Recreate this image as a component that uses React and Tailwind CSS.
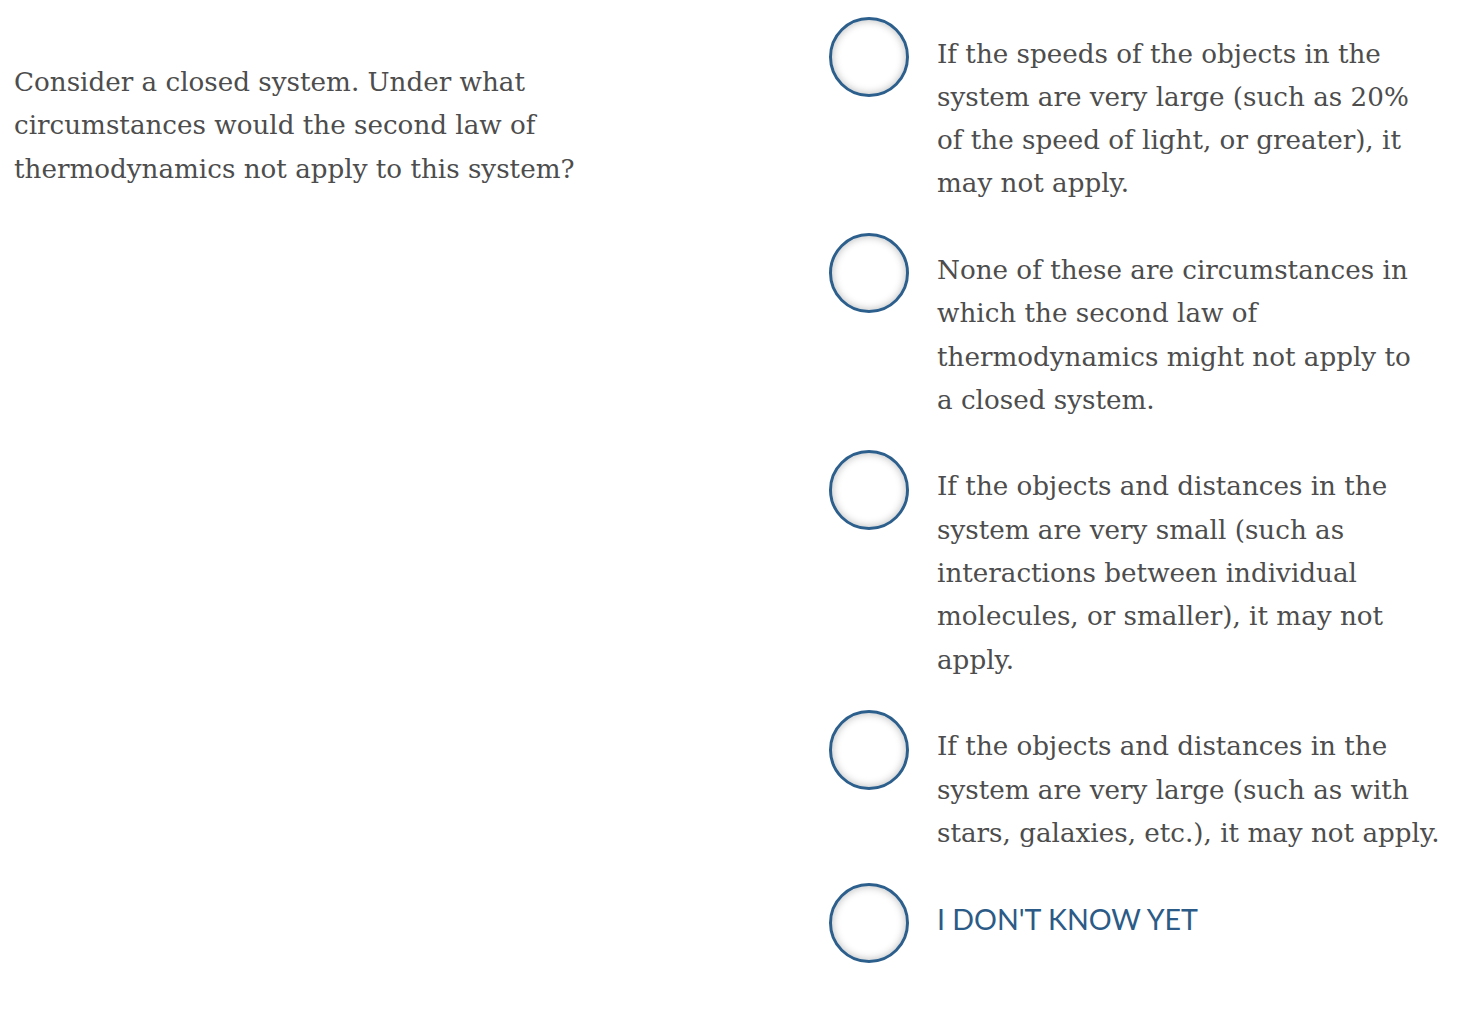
import React from 'react';

const options = [
  'If the speeds of the objects in the system are very large (such as 20% of the speed of light, or greater), it may not apply.',
  'None of these are circumstances in which the second law of thermodynamics might not apply to a\u00a0closed system.',
  'If the objects and distances in the system are very small (such as interactions between individual molecules, or smaller), it may not apply.',
  'If the objects and distances in the system are very large (such as with stars, galaxies, etc.), it may not apply.',
];

const Radio = () => (
  <div className="w-[80px] h-[80px] shrink-0 rounded-full border-[3px] border-[#2d5f8d] bg-white shadow-[inset_0_0_8px_rgba(0,0,0,0.28)]" />
);

const Option = ({ children, plain }) => (
  <div className="flex items-start">
    <Radio />
    <div
      className={
        plain
          ? "ml-[28px] w-[504px] pt-[15.5px] pb-[27.8px] text-[26.2px] leading-[43.3px] text-[#4d4d4d] font-['DejaVu_Serif',serif]"
          : "ml-[28px] w-[504px] pt-[15.5px] pb-[27.8px] text-[28.6px] leading-[43.3px] text-[#2b5b86] font-['Lato',sans-serif]"
      }
    >
      {children}
    </div>
  </div>
);

export default function App() {
  return (
    <div className="flex w-[1460px] h-[1014px] bg-white overflow-hidden">
      <div className="w-[829px] shrink-0 pl-[14px] pt-[60.5px]">
        <p className="w-[600px] text-[26.2px] leading-[43.5px] text-[#4d4d4d] font-['DejaVu_Serif',serif]">
          Consider a closed system. Under what circumstances would the second law of thermodynamics not apply to this system?
        </p>
      </div>
      <div className="flex flex-col pt-[17px]">
        {options.map((o) => (
          <Option key={o} plain>
            {o}
          </Option>
        ))}
        <Option>I DON'T KNOW YET</Option>
      </div>
    </div>
  );
}
